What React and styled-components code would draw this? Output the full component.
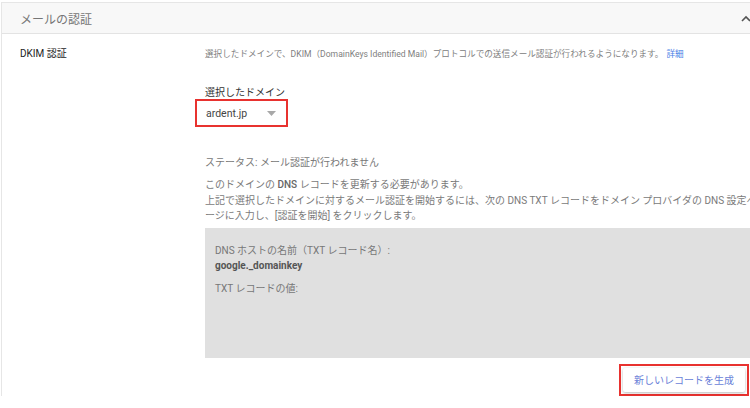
import React from 'react';
import styled, { createGlobalStyle } from 'styled-components';

const GlobalStyle = createGlobalStyle`
  html, body {
    margin: 0;
    padding: 0;
    background: #ffffff;
    overflow: hidden;
  }
  body {
    font-family: Roboto, "Noto Sans CJK JP", "Liberation Sans", sans-serif;
  }
`;

const Page = styled.div`
  padding: 2px 0 0 1px;
  width: 790px;
`;

const Card = styled.section`
  border-top: 1px solid #e6e6e6;
  border-left: 1px solid #e6e6e6;
  background: #fff;
`;

const Header = styled.header`
  display: flex;
  align-items: center;
  justify-content: space-between;
  height: 30px;
  padding: 0 40px 0 18px;
  background: #f8f8f8;
  border-bottom: 1px solid #e3e3e3;
  .title {
    font-size: 12px;
    color: #767676;
  }
`;

const Row = styled.div`
  display: grid;
  grid-template-columns: 185px 1fr;
  padding: 13px 0 0 18px;
`;

const Label = styled.div`
  font-size: 10px;
  line-height: 14px;
  color: #222;
`;

const Content = styled.div`
  display: flex;
  flex-direction: column;
  align-items: flex-start;
  width: 545px;
`;

const Desc = styled.p`
  margin: 0;
  font-size: 8.6px;
  line-height: 14px;
  color: #808080;
  white-space: nowrap;
  a {
    color: #4a7fe6;
    text-decoration: none;
    margin-left: 3px;
  }
`;

const FieldLabel = styled.div`
  margin-top: 26px;
  font-size: 10px;
  line-height: 12px;
  color: #333;
`;

const Marked = styled.div`
  border: 2px solid #e8322f;
  margin-left: ${(p) => p.$shift || 0}px;
`;

const Select = styled.div`
  display: flex;
  align-items: center;
  justify-content: space-between;
  width: 89px;
  height: 24px;
  padding: 0 10px 0 9px;
  box-sizing: border-box;
  font-size: 10.5px;
  color: #444;
  svg {
    display: block;
  }
`;

const Status = styled.div`
  margin-top: 29px;
  font-size: 10px;
  line-height: 14px;
  color: #777;
`;

const Para = styled.div`
  margin-top: 7px;
  font-size: 10px;
  line-height: 15.5px;
  color: #7a7a7a;
  white-space: nowrap;
  b {
    font-weight: 500;
    color: #666;
  }
`;

const RecordBox = styled.div`
  margin-top: 4px;
  width: 580px;
  height: 130px;
  background: #e0e0e0;
  padding: 15px 10px;
  box-sizing: border-box;
  font-size: 10px;
  line-height: 15px;
  color: #777;
  .value {
    font-weight: 700;
    color: #555;
  }
  .next {
    margin-top: 8px;
  }
`;

const Actions = styled.div`
  align-self: stretch;
  display: flex;
  justify-content: flex-end;
  padding: 6px 1px 0 0;
`;

const Button = styled.button`
  margin: 2px;
  padding: 0 11px;
  height: 24px;
  border: none;
  border-radius: 2px;
  background: #fff;
  box-shadow: 0 1px 3px rgba(0, 0, 0, 0.28);
  font-family: inherit;
  font-size: 10px;
  color: #6a7fd8;
  cursor: pointer;
`;

const Caret = () => (
  <svg width="9" height="5" viewBox="0 0 9 5">
    <path d="M0 0 L9 0 L4.5 5 Z" fill="#a8a8a8" />
  </svg>
);

const ChevronUp = () => (
  <svg width="10" height="7" viewBox="0 0 10 7">
    <path d="M1 6 L5 2 L9 6" fill="none" stroke="#555" strokeWidth="1.6" />
  </svg>
);

export default function App() {
  return (
    <Page>
      <GlobalStyle />
      <Card>
        <Header>
          <span className="title">メールの認証</span>
          <ChevronUp />
        </Header>
        <Row>
          <Label>DKIM 認証</Label>
          <Content>
            <Desc>
              選択したドメインで、DKIM（DomainKeys Identified Mail）プロトコルでの送信メール認証が行われるようになります。
              <a href="#">詳細</a>
            </Desc>
            <FieldLabel>選択したドメイン</FieldLabel>
            <Marked $shift={-10}>
              <Select>
                <span>ardent.jp</span>
                <Caret />
              </Select>
            </Marked>
            <Status>ステータス: メール認証が行われません</Status>
            <Para>
              <div>
                このドメインの <b>DNS</b> レコードを更新する必要があります。
              </div>
              <div>
                上記で選択したドメインに対するメール認証を開始するには、次の DNS TXT レコードをドメイン プロバイダの DNS 設定ペ
              </div>
              <div>ージに入力し、[認証を開始] をクリックします。</div>
            </Para>
            <RecordBox>
              <div>DNS ホストの名前（TXT レコード名）:</div>
              <div className="value">google._domainkey</div>
              <div className="next">TXT レコードの値:</div>
            </RecordBox>
            <Actions>
              <Marked>
                <Button>新しいレコードを生成</Button>
              </Marked>
            </Actions>
          </Content>
        </Row>
      </Card>
    </Page>
  );
}
